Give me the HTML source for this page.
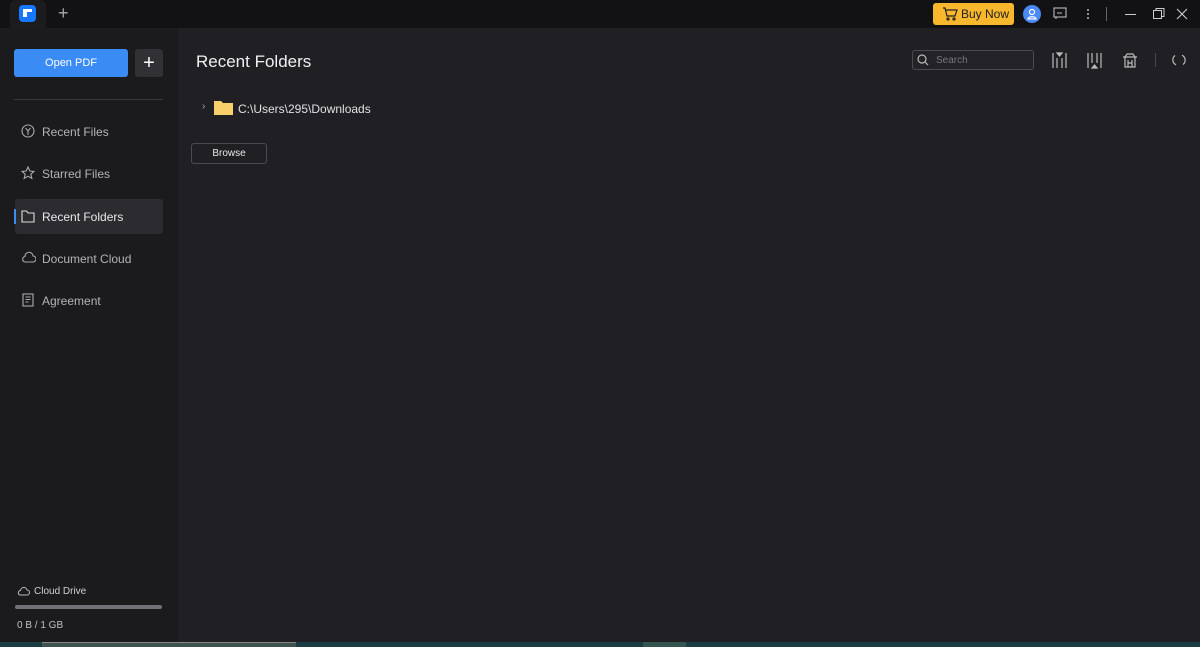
<!DOCTYPE html>
<html><head><style>
*{margin:0;padding:0;box-sizing:border-box}
body{width:1200px;height:647px;overflow:hidden;background:#202024;font-family:"Liberation Sans",sans-serif;position:relative;color:#d0d0d4}
.abs{position:absolute}
.top{left:0;top:0;width:1200px;height:28px;background:#121214}
.tab{left:10px;top:0;width:36px;height:28px;background:#1c1c1f;border-radius:6px 6px 0 0}
.side{left:0;top:28px;width:178px;height:614px;background:#1b1b1e}
.nav{left:15px;width:148px;height:35px;font-size:12px;color:#b4b4b8;line-height:37px;padding-left:27px}
.nav svg{position:absolute;left:6px;top:10px}
</style></head><body>
<div class="abs top"></div>
<div class="abs tab"></div>
<div class="abs" style="left:19px;top:5px;width:17px;height:17px;background:#1677ff;border-radius:4px"></div>
<div class="abs" style="left:23px;top:9px;width:9px;height:3px;background:#fff"></div>
<div class="abs" style="left:23px;top:9px;width:4px;height:8px;background:#fff"></div>
<div class="abs" style="left:58px;top:3px;color:#aaa;font-size:18px;font-weight:300">+</div>

<div class="abs" style="left:933px;top:3px;width:81px;height:22px;background:#f8b72c;border-radius:3px;color:#222;font-size:12px;line-height:22px;padding-left:28px">Buy Now</div>
<svg class="abs" style="left:942px;top:7px" width="16" height="14" viewBox="0 0 16 14" fill="none" stroke="#222" stroke-width="1.2"><path d="M1 1h2l2 8h8l2-6H4"/><circle cx="6" cy="12" r="1"/><circle cx="12" cy="12" r="1"/></svg>
<div class="abs" style="left:1023px;top:5px;width:18px;height:18px;background:#4a8af4;border-radius:50%"></div>
<svg class="abs" style="left:1027px;top:8px" width="10" height="12" fill="none" stroke="#fff" stroke-width="1.2"><circle cx="5" cy="4" r="2.5"/><path d="M1 11c0-3 8-3 8 0z"/></svg>
<svg class="abs" style="left:1053px;top:7px" width="14" height="13" fill="none" stroke="#bbb" stroke-width="1.1"><rect x="1" y="1" width="12" height="9"/><path d="M4 6h5M3 10v2"/></svg>
<div class="abs" style="left:1087px;top:8px;width:2px;height:12px;background:radial-gradient(circle,#bbb 1px,transparent 1px) 0 0/2px 4px"></div>
<div class="abs" style="left:1106px;top:7px;width:1px;height:14px;background:#666"></div>
<div class="abs" style="left:1125px;top:14px;width:11px;height:1px;background:#ccc"></div>
<svg class="abs" style="left:1152px;top:7px" width="13" height="13" fill="none" stroke="#ccc"><rect x="1.5" y="3.5" width="8" height="8"/><path d="M4 3.5V1.5h8v8h-2"/></svg>
<svg class="abs" style="left:1176px;top:8px" width="12" height="12" stroke="#ccc" stroke-width="1.1"><path d="M1 1l10 10M11 1L1 11"/></svg>

<div class="abs side"></div>
<div class="abs" style="left:14px;top:49px;width:114px;height:28px;background:#3b8bf5;border-radius:3px;color:#fff;font-size:11px;text-align:center;line-height:29px">Open PDF</div>
<div class="abs" style="left:135px;top:49px;width:28px;height:28px;background:#303035;border-radius:3px;color:#fff;font-size:20px;text-align:center;line-height:28px">+</div>
<div class="abs" style="left:14px;top:99px;width:149px;height:1px;background:#38383c"></div>

<div class="abs nav" style="top:114px"><svg width="14" height="14" fill="none" stroke="#aaa" stroke-width="1.1"><circle cx="7" cy="7" r="6"/><path d="M4.5 4l2.5 3 2.5-3M7 7v4"/></svg>Recent Files</div>
<div class="abs nav" style="top:156px"><svg width="14" height="14" fill="none" stroke="#aaa" stroke-width="1.1"><path d="M7 1l1.8 4 4.2.4-3.2 2.8 1 4.2L7 10.2 3.2 12.4l1-4.2L1 5.4l4.2-.4z"/></svg>Starred Files</div>
<div class="abs nav" style="top:199px;background:#2c2c30;border-radius:3px;color:#e8e8ea"><svg width="14" height="14" fill="none" stroke="#ddd" stroke-width="1.1"><path d="M1 2h4.5l1.5 2h6v9H1z"/></svg>Recent Folders</div>
<div class="abs" style="left:14px;top:209px;width:2px;height:15px;background:#3b8bf5"></div>
<div class="abs nav" style="top:241px"><svg width="15" height="14" fill="none" stroke="#aaa" stroke-width="1.1"><path d="M4 11h8a3 3 0 0 0 0-6 4 4 0 0 0-8 0.5A2.8 2.8 0 0 0 4 11z"/></svg>Document Cloud</div>
<div class="abs nav" style="top:283px"><svg width="14" height="14" fill="none" stroke="#aaa" stroke-width="1.1"><rect x="2" y="1" width="10" height="12"/><path d="M4.5 4h5M4.5 6.5h5M4.5 9h3"/></svg>Agreement</div>

<svg class="abs" style="left:17px;top:586px" width="13" height="10" fill="none" stroke="#bbb"><path d="M3 9h7a2.5 2.5 0 0 0 0-5A3.3 3.3 0 0 0 3.5 4.5 2.3 2.3 0 0 0 3 9z"/></svg>
<div class="abs" style="left:34px;top:586px;font-size:10px;color:#d0d0d4">Cloud Drive</div>
<div class="abs" style="left:15px;top:605px;width:147px;height:4px;background:#707076;border-radius:2px"></div>
<div class="abs" style="left:17px;top:620px;font-size:10px;color:#c0c0c4">0 B / 1 GB</div>

<div class="abs" style="left:196px;top:52px;font-size:17px;color:#f0f0f2">Recent Folders</div>
<div class="abs" style="left:202px;top:101px;font-size:10px;color:#aaa">›</div>
<svg class="abs" style="left:214px;top:100px" width="19" height="15"><path d="M0 1h7l2 2h10v12H0z" fill="#f7cf6b"/></svg>
<div class="abs" style="left:238px;top:102px;font-size:12px;color:#e0e0e2">C:\Users\295\Downloads</div>
<div class="abs" style="left:191px;top:143px;width:76px;height:21px;border:1px solid #4a4a50;border-radius:3px;font-size:10px;color:#e8e8ea;text-align:center;line-height:20px">Browse</div>

<div class="abs" style="left:912px;top:50px;width:122px;height:20px;border:1px solid #4a4a50;border-radius:3px;background:#232327;font-size:10px;color:#77777c;line-height:19px;padding-left:23px">Search</div>
<svg class="abs" style="left:917px;top:54px" width="12" height="12" fill="none" stroke="#bbb" stroke-width="1.2"><circle cx="5" cy="5" r="4"/><path d="M8 8l3 3"/></svg>
<svg class="abs" style="left:1051px;top:51px" width="17" height="18" fill="none" stroke="#bbb" stroke-width="1.2"><path d="M2 2v15M6 7v10M11 7v10M15 2v15"/><path d="M6 2h5l-2.5 3z" fill="#bbb"/></svg>
<svg class="abs" style="left:1086px;top:51px" width="17" height="18" fill="none" stroke="#bbb" stroke-width="1.2"><path d="M2 2v15M6 2v10M11 2v10M15 2v15"/><path d="M6 17h5l-2.5-3z" fill="#bbb"/></svg>
<svg class="abs" style="left:1122px;top:52px" width="16" height="16" fill="none" stroke="#bbb" stroke-width="1.2"><path d="M1 5h14M3 5v10h10V5M5 2h6l2 3H3zM6 8v7M10 8v7M6 11h4"/></svg>
<div class="abs" style="left:1155px;top:53px;width:1px;height:14px;background:#48484c"></div>
<svg class="abs" style="left:1172px;top:53px" width="14" height="14" fill="none" stroke="#bbb" stroke-width="1.2"><path d="M10 2.2A5.5 5.5 0 0 1 11 11.5M4 11.8A5.5 5.5 0 0 1 3 2.5"/></svg>

<div class="abs" style="left:0;top:642px;width:1200px;height:5px;background:#1d3d44"></div>
<div class="abs" style="left:42px;top:642px;width:254px;height:5px;background:#3e5350;border-top:1px solid #888"></div>
<div class="abs" style="left:643px;top:642px;width:43px;height:5px;background:#345450"></div>
</body></html>
